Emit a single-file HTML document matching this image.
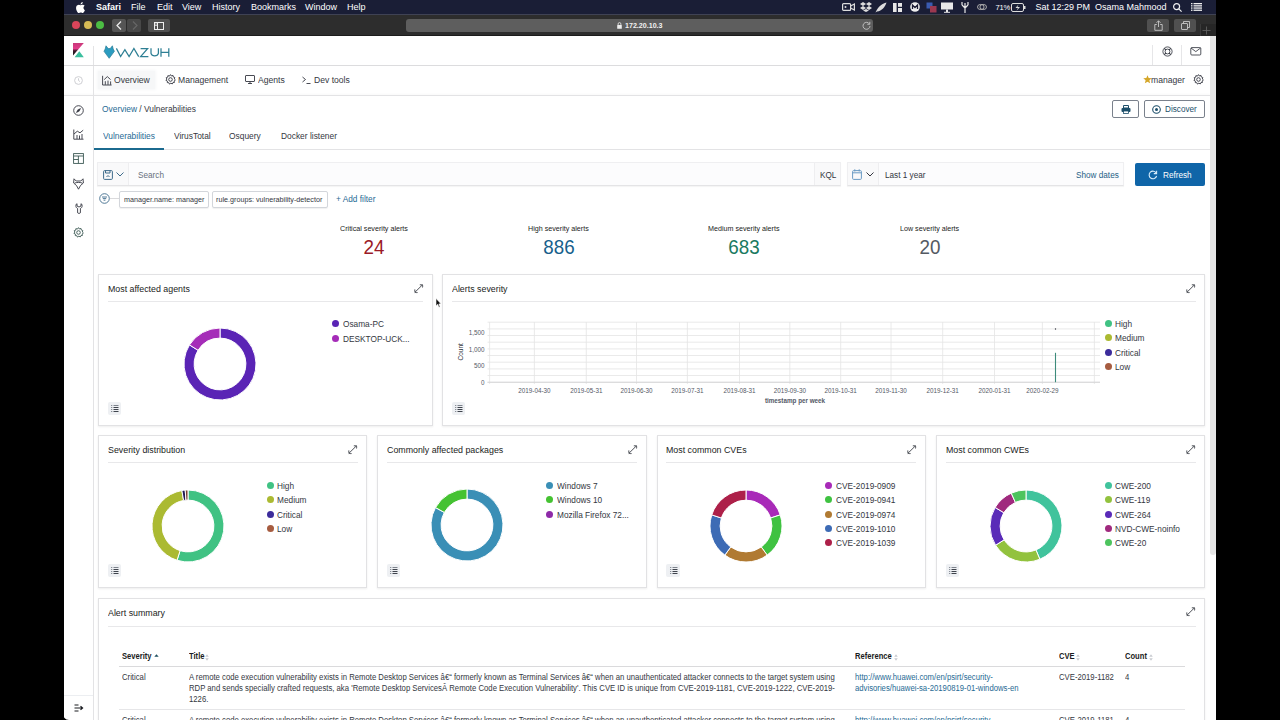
<!DOCTYPE html>
<html><head><meta charset="utf-8">
<style>
*{margin:0;padding:0;box-sizing:border-box}
html,body{width:1280px;height:720px;overflow:hidden;background:#000;font-family:"Liberation Sans",sans-serif}
.a{position:absolute}
#menubar{left:64px;top:0;width:1152px;height:14px;background:#1a1e36;color:#fff;font-size:9px}
#menubar span{position:absolute;top:2px;white-space:nowrap}
#toolbar{left:64px;top:14px;width:1152px;height:22px;background:#2d2d2d;border-top:1px solid #3f4254;border-bottom:1px solid #1c1c1c}
.dot{position:absolute;top:6px;width:8px;height:8px;border-radius:50%}
.tbtn{position:absolute;top:4px;height:13px;background:#505050;border-radius:2px}
#page{left:64px;top:36px;width:1146px;height:684px;background:#fff;overflow:hidden}
#scroll{left:1210px;top:36px;width:5.5px;height:519px;background:#e6e6e6;border-radius:0 0 3px 3px}
.t{position:absolute;white-space:nowrap;color:#343741;transform-origin:0 0}
.panel{position:absolute;background:#fff;border:1px solid #e2e2e4;box-shadow:0 1px 2px rgba(0,0,0,.07)}
.ptitle{position:absolute;left:9px;top:9px;font-size:9.5px;color:#1a1c21}
.psep{position:absolute;left:9px;right:9px;top:26px;height:1px;background:#e8eaed}
.lg{position:absolute;font-size:8.5px;color:#343741;white-space:nowrap}
.lg i{display:inline-block;width:7px;height:7px;border-radius:50%;margin-right:4px;vertical-align:-0.5px}
.lbtn{position:absolute;width:13px;height:12px;background:#eceef1;border-radius:2px}
</style></head><body>
<div id="menubar" class="a">
  <svg style="position:absolute;left:12px;top:1.5px" width="9" height="11" viewBox="0 0 17 20"><path fill="#fff" d="M14.1,10.6c0-2.6,2.1-3.8,2.2-3.9c-1.2-1.8-3.1-2-3.7-2c-1.6-0.2-3.1,0.9-3.9,0.9c-0.8,0-2-0.9-3.4-0.9C3.5,4.8,1.9,5.8,1,7.4c-1.8,3.2-0.5,7.9,1.3,10.4c0.9,1.3,1.9,2.7,3.2,2.6c1.3-0.1,1.8-0.8,3.3-0.8c1.6,0,2,0.8,3.4,0.8c1.4,0,2.3-1.3,3.1-2.5c1-1.4,1.4-2.9,1.4-2.9C16.7,14.9,14.1,13.9,14.1,10.6z M11.6,3c0.7-0.9,1.2-2,1-3.2c-1,0-2.3,0.7-3,1.6C8.9,2.2,8.3,3.4,8.5,4.5C9.6,4.6,10.8,3.9,11.6,3z"/></svg>
  <span style="left:32px;font-weight:bold">Safari</span>
  <span style="left:67px">File</span>
  <span style="left:93px">Edit</span>
  <span style="left:118px">View</span>
  <span style="left:148px">History</span>
  <span style="left:187px">Bookmarks</span>
  <span style="left:241px">Window</span>
  <span style="left:283px">Help</span>
  <svg style="position:absolute;left:778px;top:3px" width="13" height="8" viewBox="0 0 13 8" fill="none" stroke="#ddd" stroke-width="1.2"><rect x="0.6" y="0.6" width="8" height="6.8" rx="1"/><path d="M8.6,3 L12.4,1 V7 L8.6,5"/><circle cx="3.5" cy="4" r="1" fill="#ddd" stroke="none"/></svg>
  <svg style="position:absolute;left:796px;top:2px" width="12" height="10" viewBox="0 0 12 10" fill="#ddd"><path d="M3,0 L6,2 L3,4 L0,2 Z M9,0 L12,2 L9,4 L6,2 Z M3,4 L6,6 L3,8 L0,6 Z M9,4 L12,6 L9,8 L6,6 Z M3,8.6 L6,7 L9,8.6 L6,10 Z"/></svg>
  <svg style="position:absolute;left:811px;top:2px" width="12" height="11" viewBox="0 0 12 11" fill="#ddd"><path d="M0.5,10.5 C2,7 5,2 11.5,0.5 C10,5 7,9 2,9.5 Z"/></svg>
  <svg style="position:absolute;left:829px;top:2.5px" width="9" height="9" viewBox="0 0 9 9" fill="#e8e8e8"><rect x="0" y="0" width="3.6" height="9"/><rect x="5" y="0" width="4" height="3.8"/><rect x="5" y="5" width="4" height="4"/></svg>
  <svg style="position:absolute;left:846px;top:2px" width="10" height="10" viewBox="0 0 10 10"><circle cx="5" cy="5" r="4.8" fill="#eee"/><path d="M2.5,7 V3 L5,5.5 L7.5,3 V7" fill="none" stroke="#1b1c33" stroke-width="1.3"/></svg>
  <svg style="position:absolute;left:862px;top:2px" width="11" height="11" viewBox="0 0 11 11"><rect x="0.5" y="0.5" width="6" height="6" fill="#3a5bb0"/><rect x="4" y="4" width="6.5" height="6.5" fill="#9c3850"/></svg>
  <svg style="position:absolute;left:877px;top:2px" width="12" height="11" viewBox="0 0 12 11" fill="#e8e8e8"><path d="M0,0.5 H12 V7.5 H0 Z"/><rect x="5" y="7.5" width="2" height="2.5"/><rect x="3" y="9.8" width="6" height="1"/></svg>
  <svg style="position:absolute;left:897px;top:2px" width="8" height="11" viewBox="0 0 8 11" fill="none" stroke="#e8e8e8" stroke-width="1.2"><path d="M4,11 V1 M4,6 L1,3 M4,6 L7,3 M1,0 V3 M7,0 V3"/></svg>
  <svg style="position:absolute;left:913px;top:3px" width="10" height="8" viewBox="0 0 10 8" fill="none" stroke="#aaa" stroke-width="1"><ellipse cx="3.8" cy="4" rx="3.3" ry="2.6"/><ellipse cx="6.2" cy="4" rx="3.3" ry="2.6"/></svg>
  <span style="left:931.5px;font-size:7.6px;top:2.5px;letter-spacing:-0.2px">71%</span>
  <svg style="position:absolute;left:947px;top:2.5px" width="15" height="9" viewBox="0 0 15 9" fill="none" stroke="#ddd" stroke-width="1"><rect x="0.5" y="0.5" width="12" height="8" rx="1.5"/><rect x="13" y="3" width="1.5" height="3" fill="#ddd" stroke="none"/><path d="M7.5,1.5 L4.5,5 H7 L5.5,7.8 L9,4 H6.5 Z" fill="#ddd" stroke="none"/></svg>
  <span style="left:971.5px">Sat 12:29 PM</span>
  <span style="left:1031px">Osama Mahmood</span>
  <svg style="position:absolute;left:1109px;top:2.5px" width="9" height="9" viewBox="0 0 9 9" fill="none" stroke="#eee" stroke-width="1.2"><circle cx="3.6" cy="3.6" r="3"/><path d="M5.8,5.8 L8.6,8.6"/></svg>
  <svg style="position:absolute;left:1127px;top:3px" width="11" height="8" viewBox="0 0 11 8" fill="#eee"><rect x="0" y="0" width="1.5" height="1.3"/><rect x="2.5" y="0" width="8.5" height="1.3"/><rect x="0" y="2.2" width="1.5" height="1.3"/><rect x="2.5" y="2.2" width="8.5" height="1.3"/><rect x="0" y="4.4" width="1.5" height="1.3"/><rect x="2.5" y="4.4" width="8.5" height="1.3"/><rect x="0" y="6.6" width="1.5" height="1.3"/><rect x="2.5" y="6.6" width="8.5" height="1.3"/></svg>
</div>
<div id="toolbar" class="a">
  <div class="dot" style="left:8px;background:#d9455a"></div>
  <div class="dot" style="left:20px;background:#d6bb55"></div>
  <div class="dot" style="left:32px;background:#4cbd43"></div>
  <div class="tbtn" style="left:47.5px;width:14px;background:#555"></div>
  <svg class="a" style="left:51.5px;top:6px" width="6" height="9" viewBox="0 0 6 9" fill="none" stroke="#eee" stroke-width="1.2"><path d="M5,0.5 L1,4.5 L5,8.5"/></svg>
  <div class="tbtn" style="left:63px;width:14px;background:#484848"></div>
  <svg class="a" style="left:67.5px;top:6px" width="6" height="9" viewBox="0 0 6 9" fill="none" stroke="#666" stroke-width="1.2"><path d="M1,0.5 L5,4.5 L1,8.5"/></svg>
  <div class="tbtn" style="left:84px;width:21.5px;background:#505050"></div>
  <svg class="a" style="left:90px;top:6.5px" width="10" height="8" viewBox="0 0 10 8" fill="none" stroke="#eee" stroke-width="1"><rect x="0.5" y="0.5" width="9" height="7"/><path d="M3.5,0.5 V7.5 M1.3,2 H2.7 M1.3,3.5 H2.7"/></svg>
  <div class="tbtn" style="left:341.5px;width:467.5px;background:#5e5e5e;border-radius:3px"></div>
  <svg class="a" style="left:553px;top:6.8px" width="5" height="7" viewBox="0 0 5 7"><path d="M1.1,3 V2 A1.4,1.4 0 0 1 3.9,2 V3" fill="none" stroke="#eee" stroke-width="0.8"/><rect x="0.2" y="2.9" width="4.6" height="3.9" rx="0.4" fill="#eee"/></svg>
  <div class="a" style="left:561px;top:6.2px;font-size:7.9px;font-weight:bold;color:#f2f2f2;white-space:nowrap;transform:scaleX(0.9);transform-origin:0 0">172.20.10.3</div>
  <svg class="a" style="left:798px;top:6px" width="9" height="9" viewBox="0 0 9 9" fill="none" stroke="#bbb" stroke-width="1"><path d="M7.5,3 A3.5,3.5 0 1 0 8,5"/><path d="M7.8,0.8 V3.3 H5.3"/></svg>
  <div class="tbtn" style="left:1082.5px;width:22.5px;background:#505050"></div>
  <svg class="a" style="left:1089.5px;top:5px" width="9" height="11" viewBox="0 0 9 11" fill="none" stroke="#c8c8c8" stroke-width="0.9"><path d="M2.8,4.5 H0.8 V10.3 H8.2 V4.5 H6.2 M4.5,7 V0.8 M2.5,2.8 L4.5,0.8 L6.5,2.8"/></svg>
  <div class="tbtn" style="left:1110px;width:21.5px;background:#505050"></div>
  <svg class="a" style="left:1116.5px;top:6px" width="9" height="9" viewBox="0 0 9 9" fill="none" stroke="#c8c8c8" stroke-width="0.9"><rect x="0.5" y="2.5" width="6" height="6" rx="0.5"/><path d="M2.5,2.5 V0.5 H8.5 V6.5 H6.5"/></svg>
  <div class="a" style="left:1136px;top:9px;width:16px;height:13px;background:#262626;border-left:1px solid #3a3a3a"></div>
  <svg class="a" style="left:1138px;top:11px" width="9" height="9" viewBox="0 0 9 9" stroke="#666" stroke-width="0.8"><path d="M4.5,0.5 V8.5 M0.5,4.5 H8.5"/></svg>
</div>
<div class="a" style="left:64px;top:36px;width:1152px;height:684px;background:#fff"></div>
<!-- header -->
<div class="a" style="left:64px;top:65px;width:1146px;height:1px;background:#dcdcde"></div>
<div class="a" style="left:93px;top:46px;width:1px;height:19px;background:#e3e3e5"></div>
<svg class="a" style="left:72px;top:43px" width="13" height="16" viewBox="0 0 13 16"><defs><linearGradient id="kg" x1="0" y1="0" x2="0" y2="1"><stop offset="0" stop-color="#c9397a"/><stop offset="0.45" stop-color="#e33d8c"/><stop offset="0.62" stop-color="#3a1a2a"/><stop offset="1" stop-color="#111"/></linearGradient></defs><polygon points="1,0 11.8,0 1,12.6" fill="url(#kg)"/><polygon points="2.6,14.3 11.8,14.3 7.3,8.3" fill="#3bbf9e"/></svg>
<svg class="a" style="left:100px;top:43px" width="72" height="18" viewBox="100 43 72 18">
  <path d="M106,45.8 L108.2,48.6 L110.2,48.6 L112.4,45.8 L113.2,49 L114.4,51.3 L109.2,58.3 L104,51.3 L105.2,49 Z" fill="#2b9cc0" stroke="#2a7d96" stroke-width="0.7" stroke-linejoin="round"/>
  <g fill="none" stroke="#2e7f94" stroke-width="1.25" stroke-linejoin="miter" stroke-linecap="butt">
    <path d="M116.4,48.4 L120.6,56.6 L124.9,49.6 L129.1,56.6 L133.9,48.4 L138.7,56.6"/>
    <path d="M140.6,48.6 H147.6 L140.6,56.5 H148.4"/>
    <path d="M151,48.3 V53.3 A3.8,3.3 0 0 0 158.4,53.3 V48.3"/>
    <path d="M161,48.3 V56.7 M168.8,48.3 V56.7 M161,52.3 H168.8"/>
  </g>
</svg>
<div class="a" style="left:1152px;top:45px;width:1px;height:20px;background:#e6e6e8"></div>
<div class="a" style="left:1181px;top:45px;width:1px;height:20px;background:#e6e6e8"></div>
<svg class="a" style="left:1161.5px;top:45.5px" width="11" height="11" viewBox="0 0 11 11" fill="none" stroke="#343741" stroke-width="0.85"><circle cx="5.5" cy="5.5" r="4.6"/><circle cx="5.5" cy="5.5" r="2.4"/><path d="M2.3,2.3 L3.8,3.8 M8.7,2.3 L7.2,3.8 M2.3,8.7 L3.8,7.2 M8.7,8.7 L7.2,7.2" stroke-width="1.2"/></svg>
<svg class="a" style="left:1190px;top:47px" width="12" height="9" viewBox="0 0 12 9" fill="none" stroke="#343741" stroke-width="0.85"><rect x="0.8" y="0.6" width="10" height="7.4" rx="1"/><path d="M1,1 L5.8,4.6 L10.6,1"/></svg>
<!-- nav -->
<div class="a" style="left:64px;top:95px;width:1146px;height:1px;background:#e3e3e5;box-shadow:0 -1px 2px rgba(0,0,0,.04)"></div>
<div class="a" style="left:93px;top:66px;width:1px;height:654px;background:#e3e3e5"></div>
<svg class="a" style="left:73.5px;top:75.5px" width="9" height="9" viewBox="0 0 9 9" fill="none" stroke="#c8cace" stroke-width="0.9"><circle cx="4.5" cy="4.5" r="3.9"/><path d="M4.5,2.3 V4.5 L6,5.6"/></svg>
<div class="a" style="left:97.5px;top:71px;width:57px;height:18px;background:#f6f7f8;box-shadow:0 0 3px 1px #f6f7f8"></div>
<svg class="a" style="left:102px;top:75px" width="10" height="11" viewBox="0 0 10 11" fill="none" stroke="#343741" stroke-width="0.9"><path d="M0.6,0.8 V10 H9.6 M2.2,4.6 L5.3,1.6 L8.6,4.6 M3.3,9.8 V6.2 M6,9.8 V5.6 M8.6,9.8 V6.4"/></svg>
<div class="t" style="left:114px;top:74.74px;font-size:9.29px;transform:scaleX(0.9259)">Overview</div>
<svg class="a" style="left:165px;top:74px" width="11" height="11" viewBox="0 0 11 11" fill="none" stroke="#343741" stroke-width="0.9"><circle cx="5.5" cy="5.5" r="1.8"/><path d="M5.5,0.6 L6.5,2 L8,1.4 L8.3,3 L9.8,3.5 L9.3,5 L10.4,6 L9.1,7 L9.4,8.5 L7.9,8.6 L7.2,10 L5.9,9.1 L4.5,10.1 L3.8,8.7 L2.3,8.6 L2.4,7.1 L0.9,6.3 L1.9,5.1 L1.2,3.7 L2.7,3.2 L2.9,1.6 L4.4,2.1 Z"/></svg>
<div class="t" style="left:178px;top:74.74px;font-size:9.29px;transform:scaleX(0.9259)">Management</div>
<svg class="a" style="left:245px;top:75px" width="10" height="9" viewBox="0 0 10 9" fill="none" stroke="#343741" stroke-width="0.9"><rect x="0.5" y="0.5" width="9" height="6" rx="0.5"/><path d="M3,8.5 L7,8.5 M5,6.5 L5,8.5"/></svg>
<div class="t" style="left:258px;top:74.74px;font-size:9.29px;transform:scaleX(0.9259)">Agents</div>
<svg class="a" style="left:302px;top:76px" width="9" height="8" viewBox="0 0 9 8" fill="none" stroke="#343741" stroke-width="0.9"><path d="M0.5,1 L3.5,3.5 L0.5,6 M4.5,7.5 L8.5,7.5"/></svg>
<div class="t" style="left:314px;top:74.74px;font-size:9.29px;transform:scaleX(0.9259)">Dev tools</div>
<svg class="a" style="left:1143px;top:75px" width="9" height="9" viewBox="0 0 10 10"><path d="M5,0.3 L6.3,3.4 L9.7,3.6 L7.1,5.8 L7.9,9.2 L5,7.4 L2.1,9.2 L2.9,5.8 L0.3,3.6 L3.7,3.4 Z" fill="#d5a72a"/></svg>
<div class="t" style="left:1151px;top:74.74px;font-size:9.29px;transform:scaleX(0.9259)">manager</div>
<svg class="a" style="left:1193px;top:74px" width="11" height="11" viewBox="0 0 11 11" fill="none" stroke="#343741" stroke-width="0.9"><circle cx="5.5" cy="5.5" r="1.8"/><path d="M5.5,0.6 L6.5,2 L8,1.4 L8.3,3 L9.8,3.5 L9.3,5 L10.4,6 L9.1,7 L9.4,8.5 L7.9,8.6 L7.2,10 L5.9,9.1 L4.5,10.1 L3.8,8.7 L2.3,8.6 L2.4,7.1 L0.9,6.3 L1.9,5.1 L1.2,3.7 L2.7,3.2 L2.9,1.6 L4.4,2.1 Z"/></svg>

<!-- breadcrumb -->
<div class="t" style="left:102px;top:104.24px;font-size:9.07px;transform:scaleX(0.9259)"><span style="color:#1f6a94">Overview</span> / Vulnerabilities</div>
<div class="a" style="left:1112px;top:100px;width:27px;height:18px;border:1px solid #7a818c;border-radius:2px"></div>
<svg class="a" style="left:1121px;top:105px" width="10" height="9" viewBox="0 0 10 9"><path d="M2.5,0.5 H7.5 V3 H2.5 Z" fill="none" stroke="#1d4f6b" stroke-width="1"/><rect x="0.5" y="3" width="9" height="4" rx="1" fill="#1d4f6b"/><rect x="2.5" y="6" width="5" height="2.5" fill="#fff" stroke="#1d4f6b" stroke-width="0.8"/></svg>
<div class="a" style="left:1144px;top:100px;width:61px;height:18px;border:1px solid #7a818c;border-radius:2px"></div>
<svg class="a" style="left:1152px;top:105px" width="9" height="9" viewBox="0 0 9 9"><circle cx="4.5" cy="4.5" r="3.8" fill="none" stroke="#1d4f6b" stroke-width="1.1"/><circle cx="4.5" cy="4.5" r="1.5" fill="#1d4f6b"/></svg>
<div class="t" style="left:1164.5px;top:104.25px;font-size:8.86px;color:#1d4f6b;transform:scaleX(0.9259)">Discover</div>
<!-- tabs -->
<div class="a" style="left:94px;top:149px;width:1116px;height:1px;background:#e3e3e5"></div>
<div class="a" style="left:94px;top:148px;width:70px;height:2px;background:#1b6a8f"></div>
<div class="t" style="left:102.5px;top:131.24px;font-size:9.07px;color:#1f6a94;transform:scaleX(0.9259)">Vulnerabilities</div>
<div class="t" style="left:173.5px;top:131.24px;font-size:9.07px;transform:scaleX(0.9259)">VirusTotal</div>
<div class="t" style="left:229px;top:131.24px;font-size:9.07px;transform:scaleX(0.9259)">Osquery</div>
<div class="t" style="left:280.5px;top:131.24px;font-size:9.07px;transform:scaleX(0.9259)">Docker listener</div>
<!-- search -->
<div class="a" style="left:97px;top:162px;width:744px;height:24px;background:#fcfcfd;border:1px solid #efeff1;border-bottom:1px solid #e4e4e6;box-shadow:0 1px 1px rgba(0,0,0,.04)"></div>
<div class="a" style="left:98px;top:163px;width:31px;height:22px;background:#f9f9fa;border-right:1px solid #eeeef0"></div>
<svg class="a" style="left:103px;top:170px" width="10" height="10" viewBox="0 0 10 10" fill="none" stroke="#3f6c8c" stroke-width="1"><rect x="0.6" y="0.6" width="8.8" height="8.8" rx="1"/><path d="M2.5,0.6 V3 H7 V0.6 M3.5,7 L5,5.5 L6.5,7"/></svg>
<svg class="a" style="left:116px;top:172px" width="8" height="5" viewBox="0 0 8 5" fill="none" stroke="#3f6c8c" stroke-width="1"><path d="M0.5,0.5 L4,4 L7.5,0.5"/></svg>
<div class="t" style="left:138px;top:170.25px;font-size:8.86px;color:#69707d;transform:scaleX(0.9259)">Search</div>
<div class="a" style="left:814px;top:163px;width:26px;height:22px;background:#f9f9fa;border-left:1px solid #eeeef0"></div>
<div class="t" style="left:819.5px;top:170.25px;font-size:8.86px;color:#343741;transform:scaleX(0.9259)">KQL</div>
<div class="a" style="left:847px;top:162px;width:277px;height:24px;background:#fcfcfd;border:1px solid #efeff1;border-bottom:1px solid #e4e4e6;box-shadow:0 1px 1px rgba(0,0,0,.04)"></div>
<div class="a" style="left:848px;top:163px;width:31px;height:22px;background:#f9f9fa;border-right:1px solid #eeeef0"></div>
<svg class="a" style="left:852px;top:169px" width="10" height="11" viewBox="0 0 10 11" fill="none" stroke="#6a9bc4" stroke-width="1"><rect x="0.6" y="1.6" width="8.8" height="8.8" rx="1"/><path d="M0.6,3.8 H9.4 M2.8,0.3 V2.5 M7.2,0.3 V2.5"/></svg>
<svg class="a" style="left:865.5px;top:172px" width="8" height="5" viewBox="0 0 8 5" fill="none" stroke="#343741" stroke-width="1"><path d="M0.5,0.5 L4,4 L7.5,0.5"/></svg>
<div class="t" style="left:884.5px;top:170.25px;font-size:8.86px;transform:scaleX(0.9259)">Last 1 year</div>
<div class="t" style="left:1076px;top:170.25px;font-size:8.86px;color:#1f5f86;transform:scaleX(0.9259)">Show dates</div>
<div class="a" style="left:1135px;top:163px;width:70px;height:23px;background:#0f65a8;border-radius:2px"></div>
<svg class="a" style="left:1147.5px;top:169.5px" width="10" height="10" viewBox="0 0 10 10" fill="none" stroke="#d8ecfa" stroke-width="1.1"><path d="M8.3,3.2 A3.8,3.8 0 1 0 8.6,6"/><path d="M8.6,0.8 V3.6 H5.8" /></svg>
<div class="t" style="left:1162.5px;top:170.25px;font-size:8.86px;color:#fff;transform:scaleX(0.9259)">Refresh</div>
<!-- filters -->
<svg class="a" style="left:99px;top:193px" width="11" height="11" viewBox="0 0 11 11" fill="none" stroke="#3f6c8c" stroke-width="0.9"><circle cx="5.5" cy="5.5" r="4.8"/><path d="M3,4 H8 M3.8,5.6 H7.2 M4.6,7.2 H6.4"/></svg>
<div class="a" style="left:110px;top:198px;width:10px;height:1px;background:#dadadc"></div>
<div class="a" style="left:119px;top:190.5px;width:90px;height:17px;border:1px solid #d3d6db;border-radius:2px;background:#fff;box-shadow:0 1px 1px rgba(0,0,0,.06)"></div>
<div class="t" style="left:124px;top:195.27px;font-size:7.78px;transform:scaleX(0.9259)">manager.name: manager</div>
<div class="a" style="left:211.5px;top:190.5px;width:116px;height:17px;border:1px solid #d3d6db;border-radius:2px;background:#fff;box-shadow:0 1px 1px rgba(0,0,0,.06)"></div>
<div class="t" style="left:216px;top:195.27px;font-size:7.78px;transform:scaleX(0.9259)">rule.groups: vulnerability-detector</div>
<div class="t" style="left:335.5px;top:194.24px;font-size:8.96px;color:#1f6a94;transform:scaleX(0.9259)">+ Add filter</div>
<!-- stats -->
<div class="t" style="left:339.5px;top:223.77px;font-size:7.72px;color:#1a1c21;transform:scaleX(0.9259)">Critical severity alerts</div>
<div class="t" style="left:323.50px;top:236.3px;width:100px;text-align:center;font-size:20px;color:#9b1a26;transform:scaleX(0.94);transform-origin:50% 0">24</div>
<div class="t" style="left:528.3px;top:223.77px;font-size:7.72px;color:#1a1c21;transform:scaleX(0.9259)">High severity alerts</div>
<div class="t" style="left:508.60px;top:236.3px;width:100px;text-align:center;font-size:20px;color:#175f8c;transform:scaleX(0.94);transform-origin:50% 0">886</div>
<div class="t" style="left:708px;top:223.77px;font-size:7.72px;color:#1a1c21;transform:scaleX(0.9259)">Medium severity alerts</div>
<div class="t" style="left:694.10px;top:236.3px;width:100px;text-align:center;font-size:20px;color:#1a7a61;transform:scaleX(0.94);transform-origin:50% 0">683</div>
<div class="t" style="left:900px;top:223.77px;font-size:7.72px;color:#1a1c21;transform:scaleX(0.9259)">Low severity alerts</div>
<div class="t" style="left:879.65px;top:236.3px;width:100px;text-align:center;font-size:20px;color:#545a63;transform:scaleX(0.94);transform-origin:50% 0">20</div>
<!--PANELS--><div class="panel" style="left:98px;top:274px;width:334.5px;height:151.5px"></div><div class="t" style="left:107.5px;top:282.83px;font-size:9.56px;color:#1a1c21;transform:scaleX(0.9259)">Most affected agents</div><div class="a" style="left:107.5px;top:301px;width:315.5px;height:1px;background:#e8e8ea"></div><svg class="a" style="left:413.5px;top:284px" width="10" height="10" viewBox="0 0 10 10" fill="none" stroke="#3a3d45" stroke-width="0.9" stroke-linecap="round" stroke-linejoin="round"><path d="M1,8.2 L8.4,0.9 M6.2,0.8 Q8.4,0.5 8.6,1.2 Q8.8,2 8.6,3.1 M0.8,5.8 Q0.6,8 1.2,8.4 Q2,8.7 3.2,8.6"/></svg><div class="a" style="left:107.8px;top:401.5px;width:13.5px;height:13px;background:#eef0f3;border-radius:2px"></div><svg class="a" style="left:111.2px;top:405.0px" width="8" height="7" viewBox="0 0 8 7"><g fill="#8a9099"><rect x="0" y="0" width="1.3" height="1"/><rect x="0" y="2" width="1.3" height="1"/><rect x="0" y="4" width="1.3" height="1"/><rect x="0" y="6" width="1.3" height="1"/></g><g fill="#3f444d"><rect x="2.5" y="0" width="5" height="1" fill="#7d838c"/><rect x="2.5" y="2" width="5" height="1"/><rect x="2.5" y="4" width="5" height="1"/><rect x="2.5" y="6" width="5" height="1"/></g></svg><svg class="a" style="left:182px;top:325.5px" width="76" height="76" viewBox="182 325.5 76 76"><path d="M220.00,327.50 A36,36 0 1 1 189.47,344.42 L198.04,349.78 A25.9,25.9 0 1 0 220.00,337.60 Z" fill="#5a24b5" stroke="#fff" stroke-width="1"/><path d="M189.47,344.42 A36,36 0 0 1 220.00,327.50 L220.00,337.60 A25.9,25.9 0 0 0 198.04,349.78 Z" fill="#a52cb8" stroke="#fff" stroke-width="1"/></svg><div class="a" style="left:332.0px;top:320.0px;width:7px;height:7px;border-radius:50%;background:#5a24b5"></div><div class="t" style="left:342.5px;top:319.04px;font-size:8.96px;transform:scaleX(0.9259)">Osama-PC</div><div class="a" style="left:332.0px;top:334.6px;width:7px;height:7px;border-radius:50%;background:#a52cb8"></div><div class="t" style="left:342.5px;top:333.64px;font-size:8.96px;transform:scaleX(0.9259)">DESKTOP-UCK...</div><div class="panel" style="left:442px;top:274px;width:763px;height:151.5px"></div><div class="t" style="left:451.5px;top:282.83px;font-size:9.56px;color:#1a1c21;transform:scaleX(0.9259)">Alerts severity</div><div class="a" style="left:451.5px;top:301px;width:744px;height:1px;background:#e8e8ea"></div><svg class="a" style="left:1186px;top:284px" width="10" height="10" viewBox="0 0 10 10" fill="none" stroke="#3a3d45" stroke-width="0.9" stroke-linecap="round" stroke-linejoin="round"><path d="M1,8.2 L8.4,0.9 M6.2,0.8 Q8.4,0.5 8.6,1.2 Q8.8,2 8.6,3.1 M0.8,5.8 Q0.6,8 1.2,8.4 Q2,8.7 3.2,8.6"/></svg><div class="a" style="left:451.8px;top:401.5px;width:13.5px;height:13px;background:#eef0f3;border-radius:2px"></div><svg class="a" style="left:455.2px;top:405.0px" width="8" height="7" viewBox="0 0 8 7"><g fill="#8a9099"><rect x="0" y="0" width="1.3" height="1"/><rect x="0" y="2" width="1.3" height="1"/><rect x="0" y="4" width="1.3" height="1"/><rect x="0" y="6" width="1.3" height="1"/></g><g fill="#3f444d"><rect x="2.5" y="0" width="5" height="1" fill="#7d838c"/><rect x="2.5" y="2" width="5" height="1"/><rect x="2.5" y="4" width="5" height="1"/><rect x="2.5" y="6" width="5" height="1"/></g></svg><div class="a" style="left:1104.5px;top:320.0px;width:7px;height:7px;border-radius:50%;background:#40c283"></div><div class="t" style="left:1115px;top:319.04px;font-size:8.96px;transform:scaleX(0.9259)">High</div><div class="a" style="left:1104.5px;top:334.4px;width:7px;height:7px;border-radius:50%;background:#abba32"></div><div class="t" style="left:1115px;top:333.44px;font-size:8.96px;transform:scaleX(0.9259)">Medium</div><div class="a" style="left:1104.5px;top:348.8px;width:7px;height:7px;border-radius:50%;background:#3c2c9b"></div><div class="t" style="left:1115px;top:347.84px;font-size:8.96px;transform:scaleX(0.9259)">Critical</div><div class="a" style="left:1104.5px;top:363.2px;width:7px;height:7px;border-radius:50%;background:#a65c40"></div><div class="t" style="left:1115px;top:362.24px;font-size:8.96px;transform:scaleX(0.9259)">Low</div><div class="panel" style="left:98px;top:435px;width:269px;height:152.5px"></div><div class="t" style="left:107.5px;top:443.83px;font-size:9.56px;color:#1a1c21;transform:scaleX(0.9259)">Severity distribution</div><div class="a" style="left:107.5px;top:462px;width:250px;height:1px;background:#e8e8ea"></div><svg class="a" style="left:348px;top:445px" width="10" height="10" viewBox="0 0 10 10" fill="none" stroke="#3a3d45" stroke-width="0.9" stroke-linecap="round" stroke-linejoin="round"><path d="M1,8.2 L8.4,0.9 M6.2,0.8 Q8.4,0.5 8.6,1.2 Q8.8,2 8.6,3.1 M0.8,5.8 Q0.6,8 1.2,8.4 Q2,8.7 3.2,8.6"/></svg><div class="a" style="left:107.8px;top:563.5px;width:13.5px;height:13px;background:#eef0f3;border-radius:2px"></div><svg class="a" style="left:111.2px;top:567.0px" width="8" height="7" viewBox="0 0 8 7"><g fill="#8a9099"><rect x="0" y="0" width="1.3" height="1"/><rect x="0" y="2" width="1.3" height="1"/><rect x="0" y="4" width="1.3" height="1"/><rect x="0" y="6" width="1.3" height="1"/></g><g fill="#3f444d"><rect x="2.5" y="0" width="5" height="1" fill="#7d838c"/><rect x="2.5" y="2" width="5" height="1"/><rect x="2.5" y="4" width="5" height="1"/><rect x="2.5" y="6" width="5" height="1"/></g></svg><svg class="a" style="left:149.5px;top:487.5px" width="76" height="76" viewBox="149.5 487.5 76 76"><path d="M187.50,489.50 A36,36 0 1 1 176.53,559.79 L179.61,550.17 A25.9,25.9 0 1 0 187.50,499.60 Z" fill="#40c283" stroke="#fff" stroke-width="1"/><path d="M176.53,559.79 A36,36 0 0 1 181.36,490.03 L183.08,499.98 A25.9,25.9 0 0 0 179.61,550.17 Z" fill="#abba32" stroke="#fff" stroke-width="1"/><path d="M181.36,490.03 A36,36 0 0 1 184.70,489.61 L185.48,499.68 A25.9,25.9 0 0 0 183.08,499.98 Z" fill="#221a55" stroke="#fff" stroke-width="1"/><path d="M184.70,489.61 A36,36 0 0 1 187.50,489.50 L187.50,499.60 A25.9,25.9 0 0 0 185.48,499.68 Z" fill="#7a4036" stroke="#fff" stroke-width="1"/></svg><div class="a" style="left:266.5px;top:482.0px;width:7px;height:7px;border-radius:50%;background:#40c283"></div><div class="t" style="left:277px;top:481.04px;font-size:8.96px;transform:scaleX(0.9259)">High</div><div class="a" style="left:266.5px;top:496.3px;width:7px;height:7px;border-radius:50%;background:#abba32"></div><div class="t" style="left:277px;top:495.34px;font-size:8.96px;transform:scaleX(0.9259)">Medium</div><div class="a" style="left:266.5px;top:510.6px;width:7px;height:7px;border-radius:50%;background:#3c2c9b"></div><div class="t" style="left:277px;top:509.64px;font-size:8.96px;transform:scaleX(0.9259)">Critical</div><div class="a" style="left:266.5px;top:524.9px;width:7px;height:7px;border-radius:50%;background:#a65c40"></div><div class="t" style="left:277px;top:523.94px;font-size:8.96px;transform:scaleX(0.9259)">Low</div><div class="panel" style="left:377px;top:435px;width:269.5px;height:152.5px"></div><div class="t" style="left:386.5px;top:443.83px;font-size:9.56px;color:#1a1c21;transform:scaleX(0.9259)">Commonly affected packages</div><div class="a" style="left:386.5px;top:462px;width:250.5px;height:1px;background:#e8e8ea"></div><svg class="a" style="left:627.5px;top:445px" width="10" height="10" viewBox="0 0 10 10" fill="none" stroke="#3a3d45" stroke-width="0.9" stroke-linecap="round" stroke-linejoin="round"><path d="M1,8.2 L8.4,0.9 M6.2,0.8 Q8.4,0.5 8.6,1.2 Q8.8,2 8.6,3.1 M0.8,5.8 Q0.6,8 1.2,8.4 Q2,8.7 3.2,8.6"/></svg><div class="a" style="left:386.8px;top:563.5px;width:13.5px;height:13px;background:#eef0f3;border-radius:2px"></div><svg class="a" style="left:390.2px;top:567.0px" width="8" height="7" viewBox="0 0 8 7"><g fill="#8a9099"><rect x="0" y="0" width="1.3" height="1"/><rect x="0" y="2" width="1.3" height="1"/><rect x="0" y="4" width="1.3" height="1"/><rect x="0" y="6" width="1.3" height="1"/></g><g fill="#3f444d"><rect x="2.5" y="0" width="5" height="1" fill="#7d838c"/><rect x="2.5" y="2" width="5" height="1"/><rect x="2.5" y="4" width="5" height="1"/><rect x="2.5" y="6" width="5" height="1"/></g></svg><svg class="a" style="left:428.7px;top:487.29999999999995px" width="76" height="76" viewBox="428.7 487.29999999999995 76 76"><path d="M466.70,489.30 A36,36 0 1 1 435.21,507.85 L444.05,512.74 A25.9,25.9 0 1 0 466.70,499.40 Z" fill="#3a8fb6" stroke="#fff" stroke-width="1"/><path d="M435.21,507.85 A36,36 0 0 1 466.70,489.30 L466.70,499.40 A25.9,25.9 0 0 0 444.05,512.74 Z" fill="#45c232" stroke="#fff" stroke-width="1"/></svg><div class="a" style="left:546.0px;top:482.0px;width:7px;height:7px;border-radius:50%;background:#3a8fb6"></div><div class="t" style="left:556.5px;top:481.04px;font-size:8.96px;transform:scaleX(0.9259)">Windows 7</div><div class="a" style="left:546.0px;top:496.3px;width:7px;height:7px;border-radius:50%;background:#45c232"></div><div class="t" style="left:556.5px;top:495.34px;font-size:8.96px;transform:scaleX(0.9259)">Windows 10</div><div class="a" style="left:546.0px;top:510.6px;width:7px;height:7px;border-radius:50%;background:#8e2aa8"></div><div class="t" style="left:556.5px;top:509.64px;font-size:8.96px;transform:scaleX(0.9259)">Mozilla Firefox 72...</div><div class="panel" style="left:656.5px;top:435px;width:269.0px;height:152.5px"></div><div class="t" style="left:666.0px;top:443.83px;font-size:9.56px;color:#1a1c21;transform:scaleX(0.9259)">Most common CVEs</div><div class="a" style="left:666.0px;top:462px;width:250.0px;height:1px;background:#e8e8ea"></div><svg class="a" style="left:906.5px;top:445px" width="10" height="10" viewBox="0 0 10 10" fill="none" stroke="#3a3d45" stroke-width="0.9" stroke-linecap="round" stroke-linejoin="round"><path d="M1,8.2 L8.4,0.9 M6.2,0.8 Q8.4,0.5 8.6,1.2 Q8.8,2 8.6,3.1 M0.8,5.8 Q0.6,8 1.2,8.4 Q2,8.7 3.2,8.6"/></svg><div class="a" style="left:666.3px;top:563.5px;width:13.5px;height:13px;background:#eef0f3;border-radius:2px"></div><svg class="a" style="left:669.7px;top:567.0px" width="8" height="7" viewBox="0 0 8 7"><g fill="#8a9099"><rect x="0" y="0" width="1.3" height="1"/><rect x="0" y="2" width="1.3" height="1"/><rect x="0" y="4" width="1.3" height="1"/><rect x="0" y="6" width="1.3" height="1"/></g><g fill="#3f444d"><rect x="2.5" y="0" width="5" height="1" fill="#7d838c"/><rect x="2.5" y="2" width="5" height="1"/><rect x="2.5" y="4" width="5" height="1"/><rect x="2.5" y="6" width="5" height="1"/></g></svg><svg class="a" style="left:708px;top:487.5px" width="76" height="76" viewBox="708 487.5 76 76"><path d="M746.00,489.50 A36,36 0 0 1 780.24,514.38 L770.63,517.50 A25.9,25.9 0 0 0 746.00,499.60 Z" fill="#a82ab8" stroke="#fff" stroke-width="1"/><path d="M780.24,514.38 A36,36 0 0 1 767.16,554.62 L761.22,546.45 A25.9,25.9 0 0 0 770.63,517.50 Z" fill="#3fc241" stroke="#fff" stroke-width="1"/><path d="M767.16,554.62 A36,36 0 0 1 724.84,554.62 L730.78,546.45 A25.9,25.9 0 0 0 761.22,546.45 Z" fill="#b07a32" stroke="#fff" stroke-width="1"/><path d="M724.84,554.62 A36,36 0 0 1 711.76,514.38 L721.37,517.50 A25.9,25.9 0 0 0 730.78,546.45 Z" fill="#3d6bb5" stroke="#fff" stroke-width="1"/><path d="M711.76,514.38 A36,36 0 0 1 746.00,489.50 L746.00,499.60 A25.9,25.9 0 0 0 721.37,517.50 Z" fill="#ad2049" stroke="#fff" stroke-width="1"/></svg><div class="a" style="left:825.0px;top:482.0px;width:7px;height:7px;border-radius:50%;background:#a82ab8"></div><div class="t" style="left:835.5px;top:481.04px;font-size:8.96px;transform:scaleX(0.9259)">CVE-2019-0909</div><div class="a" style="left:825.0px;top:496.3px;width:7px;height:7px;border-radius:50%;background:#3fc241"></div><div class="t" style="left:835.5px;top:495.34px;font-size:8.96px;transform:scaleX(0.9259)">CVE-2019-0941</div><div class="a" style="left:825.0px;top:510.6px;width:7px;height:7px;border-radius:50%;background:#b07a32"></div><div class="t" style="left:835.5px;top:509.64px;font-size:8.96px;transform:scaleX(0.9259)">CVE-2019-0974</div><div class="a" style="left:825.0px;top:524.9px;width:7px;height:7px;border-radius:50%;background:#3d6bb5"></div><div class="t" style="left:835.5px;top:523.94px;font-size:8.96px;transform:scaleX(0.9259)">CVE-2019-1010</div><div class="a" style="left:825.0px;top:539.2px;width:7px;height:7px;border-radius:50%;background:#ad2049"></div><div class="t" style="left:835.5px;top:538.24px;font-size:8.96px;transform:scaleX(0.9259)">CVE-2019-1039</div><div class="panel" style="left:936px;top:435px;width:269px;height:152.5px"></div><div class="t" style="left:945.5px;top:443.83px;font-size:9.56px;color:#1a1c21;transform:scaleX(0.9259)">Most common CWEs</div><div class="a" style="left:945.5px;top:462px;width:250px;height:1px;background:#e8e8ea"></div><svg class="a" style="left:1186px;top:445px" width="10" height="10" viewBox="0 0 10 10" fill="none" stroke="#3a3d45" stroke-width="0.9" stroke-linecap="round" stroke-linejoin="round"><path d="M1,8.2 L8.4,0.9 M6.2,0.8 Q8.4,0.5 8.6,1.2 Q8.8,2 8.6,3.1 M0.8,5.8 Q0.6,8 1.2,8.4 Q2,8.7 3.2,8.6"/></svg><div class="a" style="left:945.8px;top:563.5px;width:13.5px;height:13px;background:#eef0f3;border-radius:2px"></div><svg class="a" style="left:949.2px;top:567.0px" width="8" height="7" viewBox="0 0 8 7"><g fill="#8a9099"><rect x="0" y="0" width="1.3" height="1"/><rect x="0" y="2" width="1.3" height="1"/><rect x="0" y="4" width="1.3" height="1"/><rect x="0" y="6" width="1.3" height="1"/></g><g fill="#3f444d"><rect x="2.5" y="0" width="5" height="1" fill="#7d838c"/><rect x="2.5" y="2" width="5" height="1"/><rect x="2.5" y="4" width="5" height="1"/><rect x="2.5" y="6" width="5" height="1"/></g></svg><svg class="a" style="left:988px;top:487.5px" width="76" height="76" viewBox="988 487.5 76 76"><path d="M1026.00,489.50 A36,36 0 0 1 1039.83,558.74 L1035.95,549.41 A25.9,25.9 0 0 0 1026.00,499.60 Z" fill="#40c39c" stroke="#fff" stroke-width="1"/><path d="M1039.83,558.74 A36,36 0 0 1 995.57,544.74 L1004.11,539.34 A25.9,25.9 0 0 0 1035.95,549.41 Z" fill="#92c23e" stroke="#fff" stroke-width="1"/><path d="M995.57,544.74 A36,36 0 0 1 995.14,506.96 L1003.80,512.16 A25.9,25.9 0 0 0 1004.11,539.34 Z" fill="#5a2bb8" stroke="#fff" stroke-width="1"/><path d="M995.14,506.96 A36,36 0 0 1 1011.24,492.66 L1015.38,501.88 A25.9,25.9 0 0 0 1003.80,512.16 Z" fill="#a02a7e" stroke="#fff" stroke-width="1"/><path d="M1011.24,492.66 A36,36 0 0 1 1026.00,489.50 L1026.00,499.60 A25.9,25.9 0 0 0 1015.38,501.88 Z" fill="#4dc45e" stroke="#fff" stroke-width="1"/></svg><div class="a" style="left:1104.5px;top:482.0px;width:7px;height:7px;border-radius:50%;background:#40c39c"></div><div class="t" style="left:1115px;top:481.04px;font-size:8.96px;transform:scaleX(0.9259)">CWE-200</div><div class="a" style="left:1104.5px;top:496.3px;width:7px;height:7px;border-radius:50%;background:#92c23e"></div><div class="t" style="left:1115px;top:495.34px;font-size:8.96px;transform:scaleX(0.9259)">CWE-119</div><div class="a" style="left:1104.5px;top:510.6px;width:7px;height:7px;border-radius:50%;background:#5a2bb8"></div><div class="t" style="left:1115px;top:509.64px;font-size:8.96px;transform:scaleX(0.9259)">CWE-264</div><div class="a" style="left:1104.5px;top:524.9px;width:7px;height:7px;border-radius:50%;background:#a02a7e"></div><div class="t" style="left:1115px;top:523.94px;font-size:8.96px;transform:scaleX(0.9259)">NVD-CWE-noinfo</div><div class="a" style="left:1104.5px;top:539.2px;width:7px;height:7px;border-radius:50%;background:#4dc45e"></div><div class="t" style="left:1115px;top:538.24px;font-size:8.96px;transform:scaleX(0.9259)">CWE-20</div><div class="panel" style="left:98px;top:598px;width:1107px;height:140px"></div><div class="t" style="left:107.5px;top:606.83px;font-size:9.56px;color:#1a1c21;transform:scaleX(0.9259)">Alert summary</div><div class="a" style="left:107.5px;top:626px;width:1088px;height:1px;background:#e8e8ea"></div><svg class="a" style="left:1186px;top:607px" width="10" height="10" viewBox="0 0 10 10" fill="none" stroke="#3a3d45" stroke-width="0.9" stroke-linecap="round" stroke-linejoin="round"><path d="M1,8.2 L8.4,0.9 M6.2,0.8 Q8.4,0.5 8.6,1.2 Q8.8,2 8.6,3.1 M0.8,5.8 Q0.6,8 1.2,8.4 Q2,8.7 3.2,8.6"/></svg><!--/PANELS-->
<!--CHART--><svg class="a" style="left:440px;top:310px" width="680" height="100" viewBox="440 310 680 100"><line x1="487.5" y1="382.2" x2="1100" y2="382.2" stroke="#e4e4e4" stroke-width="0.8"/><line x1="487.5" y1="375.5" x2="1100" y2="375.5" stroke="#e4e4e4" stroke-width="0.8"/><line x1="487.5" y1="368.9" x2="1100" y2="368.9" stroke="#e4e4e4" stroke-width="0.8"/><line x1="487.5" y1="362.2" x2="1100" y2="362.2" stroke="#e4e4e4" stroke-width="0.8"/><line x1="487.5" y1="355.5" x2="1100" y2="355.5" stroke="#e4e4e4" stroke-width="0.8"/><line x1="487.5" y1="348.9" x2="1100" y2="348.9" stroke="#e4e4e4" stroke-width="0.8"/><line x1="487.5" y1="342.2" x2="1100" y2="342.2" stroke="#e4e4e4" stroke-width="0.8"/><line x1="487.5" y1="335.5" x2="1100" y2="335.5" stroke="#e4e4e4" stroke-width="0.8"/><line x1="487.5" y1="328.9" x2="1100" y2="328.9" stroke="#e4e4e4" stroke-width="0.8"/><line x1="487.5" y1="322.2" x2="1100" y2="322.2" stroke="#e4e4e4" stroke-width="0.8"/><line x1="534.4" y1="322" x2="534.4" y2="384" stroke="#e4e4e4" stroke-width="0.8"/><line x1="586.3" y1="322" x2="586.3" y2="384" stroke="#e4e4e4" stroke-width="0.8"/><line x1="636.5" y1="322" x2="636.5" y2="384" stroke="#e4e4e4" stroke-width="0.8"/><line x1="687.4" y1="322" x2="687.4" y2="384" stroke="#e4e4e4" stroke-width="0.8"/><line x1="739.5" y1="322" x2="739.5" y2="384" stroke="#e4e4e4" stroke-width="0.8"/><line x1="789.8" y1="322" x2="789.8" y2="384" stroke="#e4e4e4" stroke-width="0.8"/><line x1="840.7" y1="322" x2="840.7" y2="384" stroke="#e4e4e4" stroke-width="0.8"/><line x1="891" y1="322" x2="891" y2="384" stroke="#e4e4e4" stroke-width="0.8"/><line x1="942.7" y1="322" x2="942.7" y2="384" stroke="#e4e4e4" stroke-width="0.8"/><line x1="994.5" y1="322" x2="994.5" y2="384" stroke="#e4e4e4" stroke-width="0.8"/><line x1="1042.4" y1="322" x2="1042.4" y2="384" stroke="#e4e4e4" stroke-width="0.8"/><line x1="489.6" y1="322" x2="489.6" y2="384" stroke="#e4e4e4" stroke-width="0.8"/><line x1="1094.4" y1="322" x2="1094.4" y2="384" stroke="#e4e4e4" stroke-width="0.8"/><line x1="487.5" y1="382.3" x2="1100" y2="382.3" stroke="#d4d4d6" stroke-width="0.9"/><text x="534.4" y="392.6" font-family="Liberation Sans" font-size="6.3" fill="#535966" text-anchor="middle">2019-04-30</text><text x="586.3" y="392.6" font-family="Liberation Sans" font-size="6.3" fill="#535966" text-anchor="middle">2019-05-31</text><text x="636.5" y="392.6" font-family="Liberation Sans" font-size="6.3" fill="#535966" text-anchor="middle">2019-06-30</text><text x="687.4" y="392.6" font-family="Liberation Sans" font-size="6.3" fill="#535966" text-anchor="middle">2019-07-31</text><text x="739.5" y="392.6" font-family="Liberation Sans" font-size="6.3" fill="#535966" text-anchor="middle">2019-08-31</text><text x="789.8" y="392.6" font-family="Liberation Sans" font-size="6.3" fill="#535966" text-anchor="middle">2019-09-30</text><text x="840.7" y="392.6" font-family="Liberation Sans" font-size="6.3" fill="#535966" text-anchor="middle">2019-10-31</text><text x="891" y="392.6" font-family="Liberation Sans" font-size="6.3" fill="#535966" text-anchor="middle">2019-11-30</text><text x="942.7" y="392.6" font-family="Liberation Sans" font-size="6.3" fill="#535966" text-anchor="middle">2019-12-31</text><text x="994.5" y="392.6" font-family="Liberation Sans" font-size="6.3" fill="#535966" text-anchor="middle">2020-01-31</text><text x="1042.4" y="392.6" font-family="Liberation Sans" font-size="6.3" fill="#535966" text-anchor="middle">2020-02-29</text><text x="484.5" y="334.5" font-family="Liberation Sans" font-size="6.3" fill="#535966" text-anchor="end">1,500</text><text x="484.5" y="351.6" font-family="Liberation Sans" font-size="6.3" fill="#535966" text-anchor="end">1,000</text><text x="484.5" y="367.90000000000003" font-family="Liberation Sans" font-size="6.3" fill="#535966" text-anchor="end">500</text><text x="484.5" y="384.5" font-family="Liberation Sans" font-size="6.3" fill="#535966" text-anchor="end">0</text><text x="0" y="0" font-family="Liberation Sans" font-size="6.5" fill="#343741" text-anchor="middle" transform="translate(462.8,351.8) rotate(-90)">Count</text><text x="795" y="402.6" font-family="Liberation Sans" font-size="6.3" font-weight="bold" fill="#535966" text-anchor="middle">timestamp per week</text><line x1="1055.5" y1="352.8" x2="1055.5" y2="382.2" stroke="#3d8b7b" stroke-width="1.1"/><circle cx="1055.5" cy="329" r="0.7" fill="#343741"/></svg><!--/CHART-->
<!--TABLE-->
<div class="t" style="left:122.4px;top:652.26px;font-size:8.21px;font-weight:bold;color:#1a1c21;transform:scaleX(0.9259)">Severity</div>
<svg class="a" style="left:154.3px;top:653.8px" width="5" height="3" viewBox="0 0 5 3"><path d="M0.3,2.8 L2.5,0.3 L4.7,2.8 Z" fill="#1d4f5f"/></svg>
<div class="t" style="left:188.75px;top:652.26px;font-size:8.21px;font-weight:bold;color:#1a1c21;transform:scaleX(0.9259)">Title</div>
<div class="t" style="left:854.6px;top:652.26px;font-size:8.21px;font-weight:bold;color:#1a1c21;transform:scaleX(0.9259)">Reference</div>
<div class="t" style="left:1058.5px;top:652.26px;font-size:8.21px;font-weight:bold;color:#1a1c21;transform:scaleX(0.9259)">CVE</div>
<div class="t" style="left:1124.6px;top:652.26px;font-size:8.21px;font-weight:bold;color:#1a1c21;transform:scaleX(0.9259)">Count</div>
<svg class="a" style="left:205px;top:653.5px" width="4" height="7" viewBox="0 0 4 7" fill="#c9ccd1"><path d="M0.2,2.8 L2,0.3 L3.8,2.8 Z M0.2,4.2 L2,6.7 L3.8,4.2 Z"/></svg>
<svg class="a" style="left:894px;top:653.5px" width="4" height="7" viewBox="0 0 4 7" fill="#c9ccd1"><path d="M0.2,2.8 L2,0.3 L3.8,2.8 Z M0.2,4.2 L2,6.7 L3.8,4.2 Z"/></svg>
<svg class="a" style="left:1076px;top:653.5px" width="4" height="7" viewBox="0 0 4 7" fill="#c9ccd1"><path d="M0.2,2.8 L2,0.3 L3.8,2.8 Z M0.2,4.2 L2,6.7 L3.8,4.2 Z"/></svg>
<svg class="a" style="left:1148.5px;top:653.5px" width="4" height="7" viewBox="0 0 4 7" fill="#c9ccd1"><path d="M0.2,2.8 L2,0.3 L3.8,2.8 Z M0.2,4.2 L2,6.7 L3.8,4.2 Z"/></svg>
<div class="a" style="left:118.5px;top:666px;width:1066px;height:1px;background:#dadadc"></div>
<div class="t" style="left:122.4px;top:672.26px;font-size:8.36px;line-height:10.8px;transform:scaleX(0.9259)">Critical</div>
<div class="t" style="left:188.75px;top:672.26px;font-size:8.36px;line-height:10.8px;transform:scaleX(0.9259)">A remote code execution vulnerability exists in Remote Desktop Services â€“ formerly known as Terminal Services â€“ when an unauthenticated attacker connects to the target system using<br>RDP and sends specially crafted requests, aka 'Remote Desktop ServicesÂ Remote Code Execution Vulnerability'. This CVE ID is unique from CVE-2019-1181, CVE-2019-1222, CVE-2019-<br>1226.</div>
<div class="t" style="left:854.6px;top:672.26px;font-size:8.36px;line-height:10.8px;color:#1f6a94;transform:scaleX(0.9259)">http://www.huawei.com/en/psirt/security-<br>advisories/huawei-sa-20190819-01-windows-en</div>
<div class="t" style="left:1058.5px;top:672.26px;font-size:8.36px;line-height:10.8px;transform:scaleX(0.9259)">CVE-2019-1182</div>
<div class="t" style="left:1124.6px;top:672.26px;font-size:8.36px;line-height:10.8px;transform:scaleX(0.9259)">4</div>
<div class="a" style="left:118.5px;top:709px;width:1066px;height:1px;background:#e6e6e8"></div>
<div class="t" style="left:122.4px;top:714.76px;font-size:8.36px;line-height:10.8px;transform:scaleX(0.9259)">Critical</div>
<div class="t" style="left:188.75px;top:714.76px;font-size:8.36px;line-height:10.8px;transform:scaleX(0.9259)">A remote code execution vulnerability exists in Remote Desktop Services â€“ formerly known as Terminal Services â€“ when an unauthenticated attacker connects to the target system using</div>
<div class="t" style="left:854.6px;top:714.76px;font-size:8.36px;line-height:10.8px;color:#1f6a94;transform:scaleX(0.9259)">http://www.huawei.com/en/psirt/security-</div>
<div class="t" style="left:1058.5px;top:714.76px;font-size:8.36px;line-height:10.8px;transform:scaleX(0.9259)">CVE-2019-1181</div>
<div class="t" style="left:1124.6px;top:714.76px;font-size:8.36px;line-height:10.8px;transform:scaleX(0.9259)">4</div>
<!--/TABLE-->
<!--SIDEBAR-->
<svg class="a" style="left:72.5px;top:104.5px" width="11" height="11" viewBox="0 0 11 11" fill="none" stroke="#343741" stroke-width="0.9"><circle cx="5.5" cy="5.5" r="4.8"/><path d="M7.6,3.4 L4.8,4.8 L3.4,7.6 L6.2,6.2 Z" fill="#343741" stroke-width="0.5"/></svg>
<svg class="a" style="left:72.5px;top:128.5px" width="11" height="11" viewBox="0 0 11 11" fill="none" stroke="#343741" stroke-width="0.9"><path d="M0.8,0.5 V10.2 H10.5 M1,5 L4.3,2.2 L7,3.8 L10.2,1.2 M4,10 V6 M6.5,10 V6.5 M9,10 V5"/></svg>
<svg class="a" style="left:72.5px;top:152.5px" width="11" height="11" viewBox="0 0 11 11" fill="none" stroke="#3d5a55" stroke-width="0.9"><rect x="0.6" y="0.6" width="9.8" height="9.8"/><path d="M0.6,3 H10.4 M5.4,3 V10.4 M0.6,6.5 H5.4"/></svg>
<svg class="a" style="left:72.5px;top:177.5px" width="11" height="12" viewBox="0 0 11 12" fill="none" stroke="#343741" stroke-width="0.9"><path d="M1,0.8 L3.2,3 H7.8 L10,0.8 L10.4,5 L7.5,7.5 L5.5,11.2 L3.5,7.5 L0.6,5 Z M1.5,5.2 C3,4.2 8,4.2 9.5,5.2"/></svg>
<svg class="a" style="left:75px;top:203px" width="8" height="11" viewBox="0 0 8 11" fill="none" stroke="#343741" stroke-width="0.9"><path d="M2,0.6 C0.5,1.5 0.3,4.5 2.6,5.5 V9.8 C2.6,10.5 5.4,10.5 5.4,9.8 V5.5 C7.7,4.5 7.5,1.5 6,0.6 V3 L4,4 L2,3 Z"/></svg>
<svg class="a" style="left:72.5px;top:226.5px" width="11" height="11" viewBox="0 0 11 11" fill="none" stroke="#3d5a55" stroke-width="0.9"><circle cx="5.5" cy="5.5" r="1.8"/><path d="M5.5,0.6 L6.5,2 L8,1.4 L8.3,3 L9.8,3.5 L9.3,5 L10.4,6 L9.1,7 L9.4,8.5 L7.9,8.6 L7.2,10 L5.9,9.1 L4.5,10.1 L3.8,8.7 L2.3,8.6 L2.4,7.1 L0.9,6.3 L1.9,5.1 L1.2,3.7 L2.7,3.2 L2.9,1.6 L4.4,2.1 Z"/></svg>
<div class="a" style="left:64px;top:695px;width:29px;height:1px;background:#eceef1"></div>
<svg class="a" style="left:73.5px;top:704px" width="10" height="8" viewBox="0 0 10 8" fill="none" stroke="#1a1c21" stroke-width="1.15"><path d="M0.5,1 H4.5 M0.5,4 H8 M0.5,7 H4.5 M6.5,2.2 L8.6,4 L6.5,5.8"/></svg>
<svg class="a" style="left:63px;top:712px" width="6" height="8" viewBox="0 0 6 8"><path d="M0,0 Q0,8 6,8 H0 Z" fill="#000"/></svg>
<svg class="a" style="left:435.3px;top:297.6px" width="7" height="10" viewBox="0 0 8 12"><path d="M1,0.5 L1,9.5 L3,7.6 L4.6,11 L5.9,10.4 L4.4,7.1 L7,7 Z" fill="#111" stroke="#fff" stroke-width="0.7"/></svg>
<!--/SIDEBAR-->
<!--PAGE3-->


<div id="scroll" class="a"></div>
</body></html>
